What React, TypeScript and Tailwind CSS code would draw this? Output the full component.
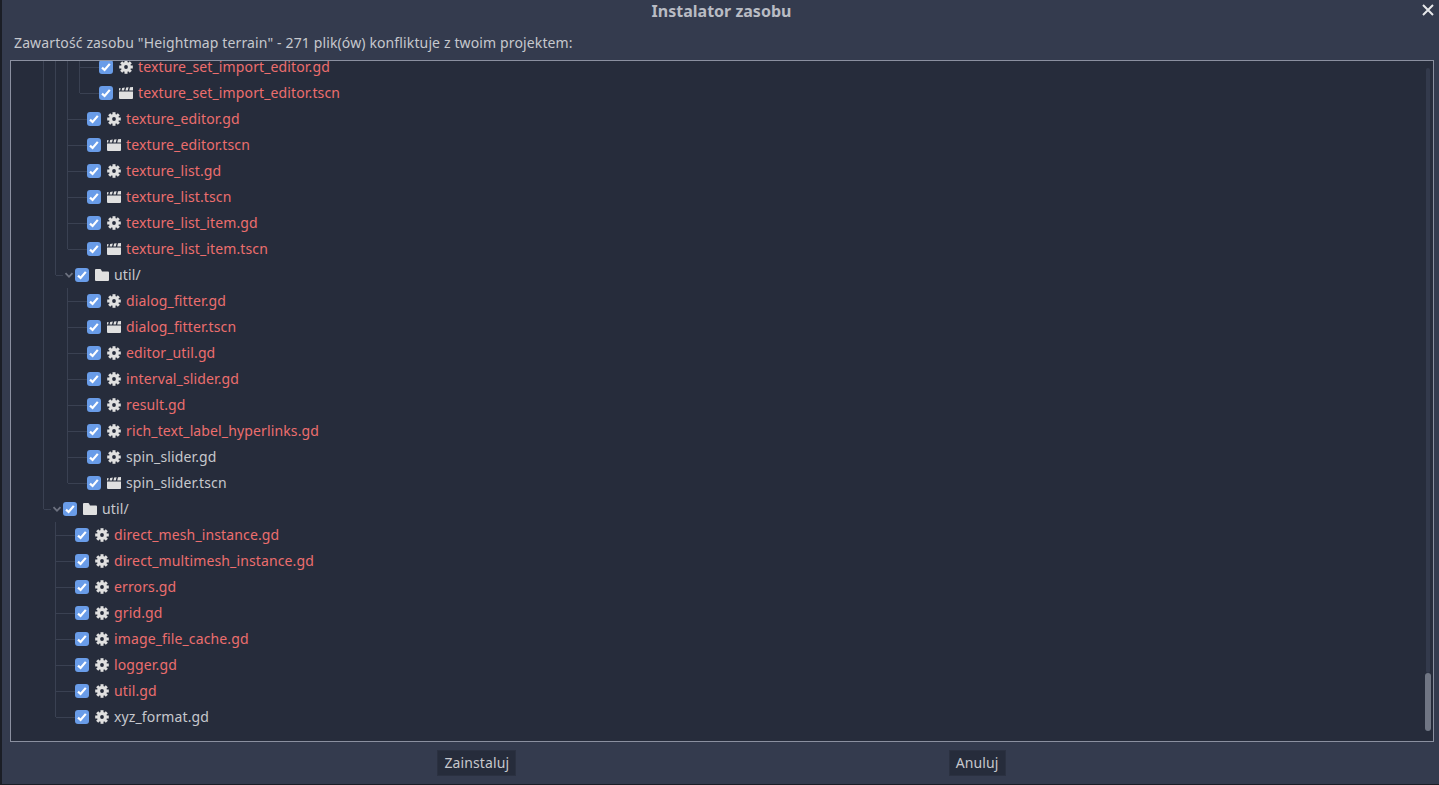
/**
 * Asset installer dialog — conflict tree with the files of the asset.
 */

const GRID = '#3a4152';

type Guide = 'v' | 't' | 'l' | 'e';
type Kind = 'gd' | 'tscn' | 'dir';

interface Row {
  guides: Guide[];
  kind: Kind;
  name: string;
  clash?: boolean;
}

const ROWS: Row[] = [
  { guides: ['v', 'v', 'v', 't'], kind: 'gd', name: 'texture_set_import_editor.gd', clash: true },
  { guides: ['v', 'v', 'v', 'l'], kind: 'tscn', name: 'texture_set_import_editor.tscn', clash: true },
  { guides: ['v', 'v', 't'], kind: 'gd', name: 'texture_editor.gd', clash: true },
  { guides: ['v', 'v', 't'], kind: 'tscn', name: 'texture_editor.tscn', clash: true },
  { guides: ['v', 'v', 't'], kind: 'gd', name: 'texture_list.gd', clash: true },
  { guides: ['v', 'v', 't'], kind: 'tscn', name: 'texture_list.tscn', clash: true },
  { guides: ['v', 'v', 't'], kind: 'gd', name: 'texture_list_item.gd', clash: true },
  { guides: ['v', 'v', 'l'], kind: 'tscn', name: 'texture_list_item.tscn', clash: true },
  { guides: ['v', 'l'], kind: 'dir', name: 'util/' },
  { guides: ['v', 'e', 't'], kind: 'gd', name: 'dialog_fitter.gd', clash: true },
  { guides: ['v', 'e', 't'], kind: 'tscn', name: 'dialog_fitter.tscn', clash: true },
  { guides: ['v', 'e', 't'], kind: 'gd', name: 'editor_util.gd', clash: true },
  { guides: ['v', 'e', 't'], kind: 'gd', name: 'interval_slider.gd', clash: true },
  { guides: ['v', 'e', 't'], kind: 'gd', name: 'result.gd', clash: true },
  { guides: ['v', 'e', 't'], kind: 'gd', name: 'rich_text_label_hyperlinks.gd', clash: true },
  { guides: ['v', 'e', 't'], kind: 'gd', name: 'spin_slider.gd' },
  { guides: ['v', 'e', 'l'], kind: 'tscn', name: 'spin_slider.tscn' },
  { guides: ['l'], kind: 'dir', name: 'util/' },
  { guides: ['e', 't'], kind: 'gd', name: 'direct_mesh_instance.gd', clash: true },
  { guides: ['e', 't'], kind: 'gd', name: 'direct_multimesh_instance.gd', clash: true },
  { guides: ['e', 't'], kind: 'gd', name: 'errors.gd', clash: true },
  { guides: ['e', 't'], kind: 'gd', name: 'grid.gd', clash: true },
  { guides: ['e', 't'], kind: 'gd', name: 'image_file_cache.gd', clash: true },
  { guides: ['e', 't'], kind: 'gd', name: 'logger.gd', clash: true },
  { guides: ['e', 't'], kind: 'gd', name: 'util.gd', clash: true },
  { guides: ['e', 'l'], kind: 'gd', name: 'xyz_format.gd' },
];

function GearIcon() {
  return (
    <svg viewBox="0 0 14 14" className="w-[14px] h-[14px] shrink-0" fill="#e0e0e0">
      {[0, 45, 90, 135].map((deg) => (
        <rect key={deg} x="5.5" y="0.2" width="3" height="13.6" transform={`rotate(${deg} 7 7)`} />
      ))}
      <circle cx="7" cy="7" r="4.9" />
      <circle cx="7" cy="7" r="1.9" fill="#262c3b" />
    </svg>
  );
}

function SceneIcon() {
  return (
    <svg viewBox="0 0 14 12" className="w-[14px] h-[12px] shrink-0" fill="#e0e0e0">
      <path d="M0 4.4h14V11a1 1 0 0 1-1 1H1a1 1 0 0 1-1-1z" />
      <path d="M0 1.2 1.6 1 1.2 3.4H0zM3.2.9 5.8.6 5 3.4H2.6zM7.2.5 9.6.3 8.8 3.4H6.4zM11 .2 14 0v3.4h-3.8z" />
    </svg>
  );
}

function FolderIcon() {
  return (
    <svg viewBox="0 0 14 12" className="w-[14px] h-[12px] shrink-0" fill="#e0e0e0">
      <path d="M1 0h4.2a1 1 0 0 1 .8.5L7 2.5h6a1 1 0 0 1 1 1V11a1 1 0 0 1-1 1H1a1 1 0 0 1-1-1V1a1 1 0 0 1 1-1z" />
    </svg>
  );
}

function Checkbox() {
  return (
    <span className="w-[14px] h-[14px] shrink-0 rounded-[3px] bg-[#699ce8] flex items-center justify-center">
      <svg viewBox="0 0 14 14" className="w-[14px] h-[14px]" fill="none" stroke="#ffffff" strokeWidth="2.2">
        <path d="M3 7.6 5.6 10 10.8 3.9" />
      </svg>
    </span>
  );
}

function Chevron() {
  return (
    <svg viewBox="0 0 12 12" className="w-[12px] h-[12px] shrink-0" fill="none" stroke="#6d7280" strokeWidth="1.8">
      <path d="M2.5 4.2 6 7.8 9.5 4.2" />
    </svg>
  );
}

// one column of the tree guides, the last one of a row holds the elbow
function GuideCell({ type, last, dir }: { type: Guide; last: boolean; dir: boolean }) {
  const width = last ? 'w-[20px]' : 'w-[12px]';
  if (type === 'e') return <div className={`${width} shrink-0`} />;
  if (type === 'v') return <div className={`${width} shrink-0 border-l`} style={{ borderColor: GRID }} />;

  return (
    <div className={`${width} shrink-0 flex`}>
      <div className={`w-px ${type === 't' ? 'h-full' : 'h-[13px]'}`} style={{ backgroundColor: GRID }} />
      <div className="flex-1 flex items-center">
        <div className="flex-1 h-px" style={{ backgroundColor: GRID }} />
        {dir && <Chevron />}
      </div>
    </div>
  );
}

function TreeRow({ row }: { row: Row }) {
  return (
    <div className="h-[26px] flex items-stretch pl-[32px]">
      {row.guides.map((g, i) => (
        <GuideCell key={i} type={g} last={i === row.guides.length - 1} dir={row.kind === 'dir'} />
      ))}
      <div className="flex items-center">
        <Checkbox />
        <span className="w-[6px]" />
        {row.kind === 'gd' && <GearIcon />}
        {row.kind === 'tscn' && <SceneIcon />}
        {row.kind === 'dir' && <FolderIcon />}
        <span className={`ml-[5px] whitespace-nowrap ${row.clash ? 'text-[#ec6e6e]' : 'text-[#c6c8cd]'}`}>
          {row.name}
        </span>
      </div>
    </div>
  );
}

function DialogButton({ label }: { label: string }) {
  return (
    <button className="h-[26px] px-[6px] bg-[#262c3b] border border-[#2b3141] text-[#c6c8cd]">
      {label}
    </button>
  );
}

export default function App() {
  return (
    <div
      className="w-[1439px] h-[785px] overflow-hidden bg-[#1b1e26] pl-[2px] pb-px text-[14px] leading-[20px] tracking-[0.13px]"
      style={{ fontFamily: '"Noto Sans", sans-serif' }}
    >
      <div className="h-full flex flex-col bg-[#343b4e]">
        {/* Title bar */}
        <div className="h-[22px] flex items-center shrink-0">
          <span className="w-[19px] shrink-0" />
          <div className="flex-1 text-center font-bold text-[16px] tracking-normal text-[#b9bcc4]">Instalator zasobu</div>
          <svg viewBox="0 0 12 12" className="w-[12px] h-[12px] mr-[5px] -mt-[2px]" stroke="#e6e7ea" strokeWidth="2">
            <path d="M1 1 11 11M11 1 1 11" />
          </svg>
        </div>

        <div className="h-[38px] pt-[11px] pl-[12px] shrink-0 text-[#c6c8cd]">
          Zawartość zasobu "Heightmap terrain" - 271 plik(ów) konfliktuje z twoim projektem:
        </div>

        {/* File tree */}
        <div className="h-[682px] shrink-0 ml-[8px] mr-[5px] border border-[#8b90a0] bg-[#262c3b] flex overflow-hidden">
          <div className="flex-1 -mt-[7px]">
            {ROWS.map((row, i) => (
              <TreeRow key={i} row={row} />
            ))}
          </div>
          <div className="w-[6px] mr-[2px] pt-[7px] pb-[10px] flex flex-col items-center">
            <div className="w-[4px] flex-1 rounded-full bg-[#333a4c]" />
            <div className="w-[6px] h-[58px] rounded-full bg-[#707684]" />
          </div>
        </div>

        <div className="flex-1 flex items-center justify-evenly pl-[3px] pr-px">
          <DialogButton label="Zainstaluj" />
          <DialogButton label="Anuluj" />
        </div>
      </div>
    </div>
  );
}
